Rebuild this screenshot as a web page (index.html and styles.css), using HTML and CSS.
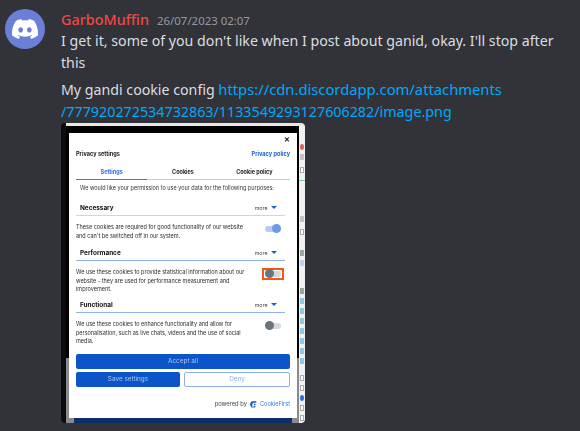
FILE: index.html
```html
<!DOCTYPE html>
<html>
<head>
    <meta charset="utf-8">
    <link rel="stylesheet" href="styles.css">
</head>
<body>
    <div class="message">
        <div class="avatar">
            <svg viewBox="0 0 24 24" width="26" height="26"><path fill="#fff" d="M20.317 4.3698a19.7913 19.7913 0 00-4.8851-1.5152.0741.0741 0 00-.0785.0371c-.211.3753-.4447.8648-.6083 1.2495-1.8447-.2762-3.68-.2762-5.4868 0-.1636-.3933-.4058-.8742-.6177-1.2495a.077.077 0 00-.0785-.037 19.7363 19.7363 0 00-4.8852 1.515.0699.0699 0 00-.0321.0277C.5334 9.0458-.319 13.5799.0992 18.0578a.0824.0824 0 00.0312.0561c2.0528 1.5076 4.0413 2.4228 5.9929 3.0294a.0777.0777 0 00.0842-.0276c.4616-.6304.8731-1.2952 1.226-1.9942a.076.076 0 00-.0416-.1057c-.6528-.2476-1.2743-.5495-1.8722-.8923a.077.077 0 01-.0076-.1277c.1258-.0943.2517-.1923.3718-.2914a.0743.0743 0 01.0776-.0105c3.9278 1.7933 8.18 1.7933 12.0614 0a.0739.0739 0 01.0785.0095c.1202.099.246.1981.3728.2924a.077.077 0 01-.0066.1276 12.2986 12.2986 0 01-1.873.8914.0766.0766 0 00-.0407.1067c.3604.698.7719 1.3628 1.225 1.9932a.076.076 0 00.0842.0286c1.961-.6067 3.9495-1.5219 6.0023-3.0294a.077.077 0 00.0313-.0552c.5004-5.177-.8382-9.6739-3.5485-13.6604a.061.061 0 00-.0312-.0286zM8.02 15.3312c-1.1825 0-2.1569-1.0857-2.1569-2.419 0-1.3332.9555-2.4189 2.157-2.4189 1.2108 0 2.1757 1.0952 2.1568 2.419 0 1.3332-.9555 2.4189-2.1569 2.4189zm7.9748 0c-1.1825 0-2.1569-1.0857-2.1569-2.419 0-1.3332.9554-2.4189 2.1569-2.4189 1.2108 0 2.1757 1.0952 2.1568 2.419 0 1.3332-.946 2.4189-2.1568 2.4189Z"/></svg>
        </div>
        <div class="content">
            <div class="header">
                <span class="username">GarboMuffin</span>
                <span class="timestamp">26/07/2023 02:07</span>
            </div>
            <p class="text">I get it, some of you don't like when I post about ganid, okay. I'll stop after this</p>
            <p class="text second">My gandi cookie config <a class="link">https://cdn.discordapp.com/attachments<br><span class="link-ids">/777920272534732863/1133549293127606282/image.png</span></a></p>

            <div class="shot">
                <!-- page behind the dialog -->
                <div class="shot-top"></div>
                <div class="shot-grey"></div>
                <div class="shot-navy"></div>
                <div class="shot-page">
                    <div class="bit s-red"></div>
                    <div class="bit s-text"></div>
                    <div class="bit s-box gap-3"></div>
                    <div class="bit s-green"></div>
                    <div class="bit s-text gap-31"></div>
                    <div class="bit s-box gap-3"></div>
                    <div class="bit s-dark gap-11"></div>
                    <div class="bit s-blue"></div>
                    <div class="bit s-dark gap-18"></div>
                    <div class="bit s-check"></div>
                    <div class="bit s-check"></div>
                    <div class="bit s-check"></div>
                    <div class="bit s-check"></div>
                    <div class="bit s-check"></div>
                    <div class="bit s-check"></div>
                    <div class="bit s-check"></div>
                    <div class="bit s-box gap-7"></div>
                    <div class="bit s-box"></div>
                    <div class="bit s-dot"></div>
                    <div class="bit s-box"></div>
                    <div class="bit s-box"></div>
                </div>

                <div class="modal">
                    <div class="close">✕</div>
                    <div class="modal-head">
                        <span class="modal-title">Privacy settings</span>
                        <span class="modal-policy">Privacy policy</span>
                    </div>
                    <div class="tabs">
                        <div class="tab active">Settings</div>
                        <div class="tab">Cookies</div>
                        <div class="tab">Cookie policy</div>
                    </div>
                    <p class="intro">We would like your permission to use your data for the following purposes:</p>

                    <div class="section first">
                        <span class="section-name">Necessary</span>
                        <span class="more">more <i class="arrow"></i></span>
                    </div>
                    <div class="row row-two">
                        <p class="desc">These cookies are required for good functionality of our website and can't be switched off in our system.</p>
                        <div class="toggle on"></div>
                    </div>

                    <div class="section">
                        <span class="section-name">Performance</span>
                        <span class="more">more <i class="arrow"></i></span>
                    </div>
                    <div class="row">
                        <p class="desc">We use these cookies to provide statistical information about our website - they are used for performance measurement and improvement.</p>
                        <div class="toggle focus"></div>
                    </div>

                    <div class="section">
                        <span class="section-name">Functional</span>
                        <span class="more">more <i class="arrow"></i></span>
                    </div>
                    <div class="row">
                        <p class="desc">We use these cookies to enhance functionality and allow for personalisation, such as live chats, videos and the use of social media.</p>
                        <div class="toggle"></div>
                    </div>

                    <div class="btn accept">Accept all</div>
                    <div class="btn-row">
                        <div class="btn save">Save settings</div>
                        <div class="btn deny">Deny</div>
                    </div>
                    <div class="powered">
                        powered by
                        <svg class="cf-logo" viewBox="0 0 12 12" width="9" height="9"><path d="M10 1.500H6A4.500 4.500 0 0 0 3 9.500L4.500 11V5.500A2 2 0 0 1 6.500 3.500H9.500ZM9 5H6.500V7H8.500ZM6 8V10.500A4 4 0 0 0 9 9L8 8Z" fill="#1a5fc8"/></svg>
                        <span class="cf-name">CookieFirst</span>
                    </div>
                </div>
            </div>
        </div>
    </div>
</body>
</html>
```
FILE: styles.css
```css
/* page */
html, body {
    height: 100%;
}
body {
    margin: 0;
    background-color: #313338;
    overflow: hidden;
    font-family: "Noto Sans", sans-serif;
}

/* message */
.message {
    display: flex;
    padding: 8px 0 0 5px;
}
.avatar {
    width: 40px;
    height: 40px;
    flex-shrink: 0;
    margin: 1px 16px 0 0;
    border-radius: 50%;
    background-color: #6b7fd7;
    display: flex;
    align-items: center;
    justify-content: center;
}
.content {
    width: 500px;
}
.header {
    height: 22px;
    line-height: 22px;
    white-space: nowrap;
}
.username {
    color: #f04747;
    font-size: 14.4px;
    font-weight: 500;
}
.timestamp {
    color: #949ba4;
    font-size: 11.4px;
    margin-left: 4px;
}
.text {
    margin: 0;
    color: #dbdee1;
    font-size: 14.2px;
    line-height: 22px;
}
.text.second {
    margin-top: 5px;
}
.link {
    color: #00a8fc;
    font-size: 14.75px;
    line-height: 1;
}
.link-ids {
    font-size: 14.3px;
}

/* screenshot attachment */
.shot {
    position: relative;
    width: 244px;
    height: 300px;
    border-radius: 4px;
    overflow: hidden;
    background: linear-gradient(90deg, #0c0c0e 5px, #000 5px);
    font-family: Inter, sans-serif;
    color: #222;
}
.shot-top {
    position: absolute;
    left: 5px;
    right: 0;
    top: 0;
    height: 3px;
    background-color: #e8e8e8;
}
.shot-grey {
    position: absolute;
    left: 5px;
    right: 6px;
    top: 235px;
    bottom: 0;
    background-color: #8a8a8a;
}
.shot-navy {
    position: absolute;
    left: 13px;
    width: 218px;
    bottom: 0;
    height: 5px;
    background-color: #0d2d6b;
}
.shot-page {
    position: absolute;
    left: 238px;
    right: 0;
    top: 3px;
    bottom: 0;
    display: flex;
    flex-direction: column;
    gap: 4px;
    padding-top: 18px;
    background-color: #f2f2f2;
}
.bit {
    flex-shrink: 0;
    width: 4px;
    height: 6px;
    margin-left: 1px;
    filter: blur(0.7px);
}
.s-red {
    background-color: #d9645a;
    border-radius: 50%;
}
.s-text {
    background-color: #c4c4c4;
}
.s-box {
    box-sizing: border-box;
    border: 1px solid #aaa;
    background-color: #fff;
}
.s-green {
    width: 6px;
    height: 1px;
    margin-top: 2.5px;
    margin-left: 0;
    background-color: #6fd09a;
}
.s-dark {
    background-color: #9aa8a0;
}
.s-blue {
    background-color: #c5d0ee;
}
.s-check {
    background-color: #8fcbe0;
}
.s-dot {
    background-color: #2f6fdc;
    border-radius: 50%;
}
.gap-3 {
    margin-top: 3px;
}
.gap-7 {
    margin-top: 7px;
}
.gap-11 {
    margin-top: 11px;
}
.gap-18 {
    margin-top: 18px;
}
.gap-31 {
    margin-top: 31.5px;
}

/* cookie dialog */
.modal {
    position: absolute;
    left: 8px;
    top: 10px;
    width: 228px;
    height: 285px;
    box-sizing: border-box;
    padding: 0 7px;
    background-color: #fff;
    font-size: 5.5px;
    line-height: 8.5px;
    filter: blur(0.3px);
}
.close {
    height: 14px;
    padding-top: 3px;
    box-sizing: border-box;
    text-align: right;
    font-size: 7px;
    font-weight: 700;
    color: #111;
}
.modal-head {
    display: flex;
    justify-content: space-between;
    margin-top: 3px;
    font-size: 5.6px;
    font-weight: 700;
}
.modal-policy {
    color: #1b62d0;
}
.tabs {
    display: flex;
    margin-top: 9px;
    border-bottom: 1px solid #ccc;
    font-weight: 700;
}
.tab {
    width: 71.4px;
    height: 11px;
    text-align: center;
}
.tab.active {
    color: #2f6fdc;
    border-bottom: 1px solid #3f78d8;
    margin-bottom: -1px;
}
.intro {
    margin: 4px 0 0 4px;
    color: #333;
}
.section {
    display: flex;
    justify-content: space-between;
    align-items: center;
    width: 209px;
    margin-top: 4.5px;
    padding: 0 8px 0 4px;
    box-sizing: border-box;
    height: 15px;
    border-bottom: 1px solid #8fb0ea;
}
.section.first {
    margin-top: 9px;
    border-bottom-color: #c5d5f3;
}
.section-name {
    font-size: 6.4px;
    font-weight: 700;
    color: #111;
}
.more {
    color: #444;
    font-size: 5.3px;
}
.arrow {
    display: inline-block;
    margin-left: 2px;
    vertical-align: 1px;
    border-left: 3px solid transparent;
    border-right: 3px solid transparent;
    border-top: 3px solid #1b62d0;
}
.row {
    display: flex;
    justify-content: space-between;
    margin-top: 7px;
    min-height: 25.5px;
}
.row-two {
    min-height: 18.5px;
}
.desc {
    margin: 0;
    width: 178px;
    color: #2a2a2a;
}
.toggle {
    position: relative;
    width: 16px;
    height: 6px;
    margin: 2.5px 9px 0 0;
    border-radius: 3px;
    background-color: #d5d8dc;
}
.toggle::after {
    content: "";
    position: absolute;
    left: 0;
    top: -1.5px;
    width: 9px;
    height: 9px;
    border-radius: 50%;
    background-color: #6b7580;
}
.toggle.on {
    background-color: #b7cdf0;
}
.toggle.on::after {
    left: 7px;
    background-color: #6f9be6;
}
.toggle.focus::before {
    content: "";
    position: absolute;
    left: -3px;
    right: -3px;
    top: -3px;
    bottom: -3px;
    border: 2px solid #f05a14;
}

/* buttons */
.btn {
    box-sizing: border-box;
    height: 15px;
    line-height: 15px;
    border-radius: 2px;
    text-align: center;
    font-size: 6.4px;
    background-color: #0b55c9;
    color: #a9c4f0;
}
.accept {
    margin-top: 8.5px;
}
.btn-row {
    display: flex;
    gap: 4px;
    margin-top: 3px;
}
.save, .deny {
    flex: 1;
}
.deny {
    background-color: #fff;
    border: 1px solid #8fb0ea;
    line-height: 13px;
    color: #8fb0ea;
}
.powered {
    display: flex;
    align-items: center;
    justify-content: flex-end;
    gap: 2px;
    margin-top: 12.5px;
    font-size: 5.8px;
    color: #444;
}
.cf-name {
    color: #3a7bdc;
    font-size: 5.6px;
}
```
